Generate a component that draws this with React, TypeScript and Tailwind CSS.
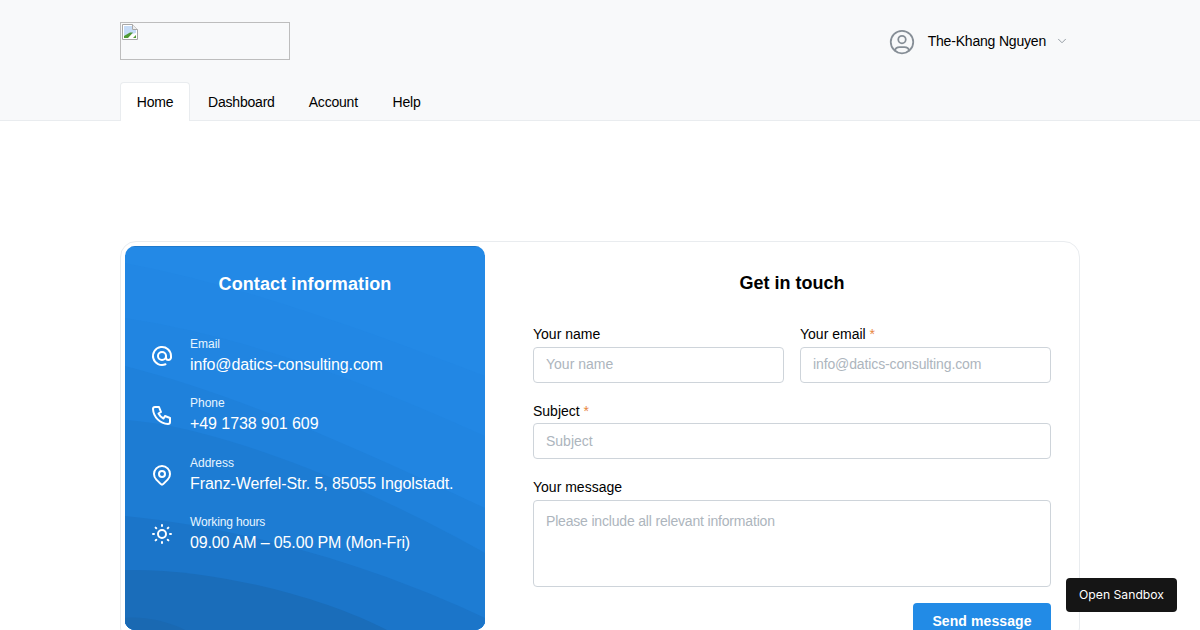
import type { ReactNode } from "react";

const font = "font-['Liberation_Sans',Arial,sans-serif]";

function TablerIcon({ size = 24, stroke = 2, color = "currentColor", children }: { size?: number; stroke?: number; color?: string; children: ReactNode }) {
  return (
    <svg width={size} height={size} viewBox="0 0 24 24" fill="none" stroke={color} strokeWidth={stroke} strokeLinecap="round" strokeLinejoin="round" className="shrink-0">
      {children}
    </svg>
  );
}

function Detail({ icon, label, value, labelClass = "", valueClass = "" }: { icon: ReactNode; label: string; value: string; labelClass?: string; valueClass?: string }) {
  return (
    <div className="flex items-center">
      <div className="flex w-[24px] justify-center ml-[1px] mr-[16px] text-white">{icon}</div>
      <div>
        <div className={`text-[12px] leading-[18px] text-[#e7f5ff] ${labelClass}`}>{label}</div>
        <div className={`text-[16px] leading-[24px] text-white whitespace-nowrap ${valueClass}`}>{value}</div>
      </div>
    </div>
  );
}

function Field({ label, required, placeholder, inputClass = "" }: { label: string; required?: boolean; placeholder: string; inputClass?: string }) {
  return (
    <div className="flex-1">
      <div className="text-[14px] leading-[20px] text-black mb-[2.7px]">
        {label}
        {required && <span className="text-[#e8873f]"> *</span>}
      </div>
      <input
        placeholder={placeholder}
        className={`block w-full h-[36px] px-[12px] border border-[#ced4da] rounded-[4px] text-[14px] bg-white outline-none placeholder:text-[#adb5bd] ${inputClass}`}
      />
    </div>
  );
}

function Waves() {
  return (
    <svg className="absolute inset-0 w-full h-full" viewBox="0 0 360 384" preserveAspectRatio="none">
      <rect width="360" height="384" fill="#2389e6" />
      <path d="M0 17C120 40 240 84 360 130V384H0Z" fill="#2287e4" />
      <path d="M0 72C120 90 240 136 360 190V384H0Z" fill="#2185e1" />
      <path d="M0 120C120 150 260 215 360 262V384H0Z" fill="#1f81db" />
      <path d="M0 174C100 180 260 250 360 307V384H0Z" fill="#1d7cd3" />
      <path d="M0 270C120 282 250 320 360 372V384H0Z" fill="#1b75c9" />
      <path d="M0 324C90 322 200 352 262 384H0Z" fill="#1a6dba" />
      <path d="M0 372C20 370 44 376 60 384H0Z" fill="#1a69b2" />
      <rect width="360" height="0.6" fill="#1a6fbd" />
    </svg>
  );
}

export default function App() {
  return (
    <div className={`${font} w-[1200px] h-[630px] overflow-hidden bg-white relative text-black`}>
      <header className="h-[121px] bg-[#f8f9fa] border-b border-[#e9ecef]">
        <div className="w-[960px] mx-auto">
          <div className="flex justify-between pt-[22px] h-[82px]">
            <div className="w-[170px] h-[38px] border border-[#bdbdbd] box-border">
              <svg width="16" height="16" viewBox="0 0 16 16" className="ml-[1px] mt-[1px]">
                <path d="M0.5 0.5H10.5L15.5 5.5V15.5H0.5Z" fill="#fff" stroke="#a8a8a8" />
                <path d="M10.5 .5V5.5H15.5" fill="#eee" stroke="#a8a8a8" />
                <path d="M2 2H10V6H14V9L2 12Z" fill="#c6dcf7" />
                <path d="M2 14V12L8 8.5H11L6 14Z" fill="#4f9a34" />
                <path d="M11 14L14 11V14Z" fill="#4f9a34" />
              </svg>
            </div>
            <div className="flex items-center h-[38px] mr-[11px]">
              <div className="mt-[2px]">
                <TablerIcon size={30} stroke={1.4} color="#868e96">
                  <circle cx="12" cy="12" r="9" />
                  <circle cx="12" cy="10" r="3" />
                  <path d="M6.168 18.849a4 4 0 0 1 3.832 -2.849h4a4 4 0 0 1 3.834 2.855" />
                </TablerIcon>
              </div>
              <span className="ml-[11px] text-[14px] tracking-[-0.19px]">The-Khang Nguyen</span>
              <div className="ml-[9px]">
                <TablerIcon size={14} stroke={1.5} color="#868e96">
                  <path d="M6 9l6 6l6 -6" />
                </TablerIcon>
              </div>
            </div>
          </div>
          <nav className="flex text-[14px] h-[39px] tracking-[-0.2px]">
            <div className="w-[70px] mr-[0.5px] pt-[1px] flex items-center justify-center bg-white border border-b-0 border-[#e9ecef] rounded-t-[4px]">Home</div>
            <div className="pl-[17.5px] pr-[17px] pt-[1px] flex items-center">Dashboard</div>
            <div className="pl-[17px] pr-[17.6px] pt-[1px] flex items-center">Account</div>
            <div className="px-[17px] pt-[1px] flex items-center">Help</div>
          </nav>
        </div>
      </header>

      <div className="w-[960px] mx-auto mt-[120px] border border-[#e9ecef] rounded-[16px] bg-white p-[4px] flex">
        <div className="relative w-[360px] h-[384px] rounded-[10px] overflow-hidden shrink-0">
          <Waves />
          <div className="relative px-[24px] pt-[25px]">
            <h2 className="text-[18px] leading-[27px] font-bold text-white text-center tracking-[0.1px]">Contact information</h2>
            <div className="mt-[36.9px] flex flex-col gap-[17.4px]">
              <Detail
                icon={
                  <TablerIcon>
                    <circle cx="12" cy="12" r="4" />
                    <path d="M16 12v1.5a2.5 2.5 0 0 0 5 0v-1.5a9 9 0 1 0 -5.5 8.28" />
                  </TablerIcon>
                }
                label="Email"
                value="info@datics-consulting.com"
                valueClass="tracking-[-0.12px]"
              />
              <Detail
                icon={
                  <TablerIcon>
                    <path d="M5 4h4l2 5l-2.5 1.5a11 11 0 0 0 5 5l1.5 -2.5l5 2v4a2 2 0 0 1 -2 2a16 16 0 0 1 -15 -15a2 2 0 0 1 2 -2" />
                  </TablerIcon>
                }
                label="Phone"
                value="+49 1738 901 609"
                valueClass="tracking-[-0.06px]"
              />
              <Detail
                icon={
                  <TablerIcon>
                    <circle cx="12" cy="11" r="3" />
                    <path d="M17.657 16.657l-4.243 4.243a2 2 0 0 1 -2.827 0l-4.244 -4.243a8 8 0 1 1 11.314 0z" />
                  </TablerIcon>
                }
                label="Address"
                value="Franz-Werfel-Str. 5, 85055 Ingolstadt."
                valueClass="tracking-[-0.08px]"
              />
              <Detail
                icon={
                  <TablerIcon>
                    <circle cx="12" cy="12" r="4" />
                    <path d="M3 12h1m8 -9v1m8 8h1m-9 8v1m-6.4 -15.4l.7 .7m12.1 -.7l-.7 .7m0 11.4l.7 .7m-12.1 -.7l-.7 .7" />
                  </TablerIcon>
                }
                label="Working hours"
                value="09.00 AM – 05.00 PM (Mon-Fri)"
                labelClass="tracking-[-0.15px]"
                valueClass="tracking-[-0.14px]"
              />
            </div>
          </div>
        </div>

        <form className="flex-1 pl-[48px] pr-[24px] pt-[24px]">
          <h2 className="text-[18px] leading-[27px] font-bold text-center">Get in touch</h2>
          <div className="flex gap-[16px] mt-[26.9px]">
            <Field label="Your name" placeholder="Your name" inputClass="pb-[2px]" />
            <Field label="Your email" required placeholder="info@datics-consulting.com" inputClass="pb-[2px] tracking-[-0.12px]" />
          </div>
          <div className="mt-[18px]">
            <Field label="Subject" required placeholder="Subject" />
          </div>
          <div className="mt-[17.7px]">
            <div className="text-[14px] leading-[20px] mb-[2.7px]">Your message</div>
            <textarea
              placeholder="Please include all relevant information"
              className="block w-full h-[87px] px-[12px] py-[10px] border border-[#ced4da] rounded-[4px] text-[14px] leading-[20px] tracking-[-0.18px] resize-none outline-none placeholder:text-[#adb5bd]"
            />
          </div>
          <div className="flex justify-end mt-[16px]">
            <button type="button" className="w-[138px] h-[36px] pt-[1px] bg-[#228be6] rounded-[4px] text-white text-[14px] font-bold tracking-[0.1px]">Send message</button>
          </div>
        </form>
      </div>

      <div className="absolute left-[1066px] top-[578px] w-[111px] h-[34px] rounded-[4px] bg-[#151515] text-white text-[12.2px] font-['Inter',sans-serif] flex items-center justify-center">
        Open Sandbox
      </div>
    </div>
  );
}
